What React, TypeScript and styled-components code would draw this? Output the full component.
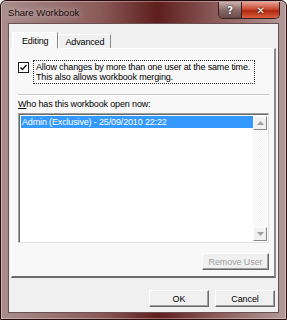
import React, { useState } from "react";
import styled, { createGlobalStyle } from "styled-components";

const GlobalStyle = createGlobalStyle`
  html, body { margin: 0; padding: 0; background: #ffffff; }
  body {
    font-family: "Liberation Sans", Arial, sans-serif;
    font-size: 9px;
    letter-spacing: -0.15px;
    color: #000;
  }
`;

const Window = styled.div`
  width: 287px;
  height: 320px;
  box-sizing: border-box;
  border: 1px solid #2a0a0a;
  border-radius: 6px 6px 0 0;
  background: linear-gradient(90deg, #a88e8c 0%, #8a5a58 35%, #5e1e1c 55%, #8a5a58 75%, #b29a98 100%);
  display: flex;
  flex-direction: column;
  padding: 0 7px 6px 7px;
  box-shadow: inset 0 0 0 1px rgba(255, 255, 255, 0.35);
`;

const TitleBar = styled.div`
  height: 22px;
  display: flex;
  align-items: flex-start;
  justify-content: space-between;
`;

const Title = styled.span`
  font-size: 9.6px;
  letter-spacing: 0;
  color: #1a0a0a;
  padding-top: 6px;
  text-shadow: 0 0 6px rgba(255, 255, 255, 0.8);
`;

const Caption = styled.div`
  display: flex;
  margin-top: 1px;
  margin-right: -1px;
  border: 1px solid #3a2020;
  border-top: none;
  border-radius: 0 0 5px 5px;
  overflow: hidden;
  height: 16px;
`;

const CapButton = styled.div<{ $close?: boolean }>`
  width: ${(p) => (p.$close ? "37px" : "22px")};
  display: flex;
  align-items: center;
  justify-content: center;
  color: #fff;
  font-family: "DejaVu Sans", sans-serif;
  font-weight: bold;
  font-size: 10px;
  text-shadow: 0 0 2px #000;
  background: ${(p) =>
    p.$close
      ? "linear-gradient(180deg, #e8a090 0%, #c84a30 45%, #b02810 55%, #d86040 100%)"
      : "linear-gradient(180deg, #c8b0ae 0%, #8a6a68 50%, #6a4a48 100%)"};
  border-left: ${(p) => (p.$close ? "1px solid #3a2020" : "none")};
`;

const Client = styled.div`
  flex: 1;
  background: #f0f0f0;
  border: 1px solid #6a5050;
  display: flex;
  flex-direction: column;
  padding: 7px 2px 0 2px;
`;

const TabStrip = styled.div`
  display: flex;
  align-items: flex-end;
  height: 17px;
  padding-left: 1px;
  position: relative;
  z-index: 1;
`;

const Tab = styled.div<{ $active?: boolean }>`
  height: ${(p) => (p.$active ? "17px" : "14px")};
  box-sizing: border-box;
  padding: 0 ${(p) => (p.$active ? "9px" : "6px")};
  display: flex;
  align-items: center;
  background: ${(p) => (p.$active ? "#f8f8f8" : "#f0f0f0")};
  border: 1px solid #ffffff;
  border-right: 1px solid #888;
  border-bottom: ${(p) => (p.$active ? "1px solid #f8f8f8" : "none")};
  ${(p) => (p.$active ? "margin-bottom: -1px;" : "")}
`;

const Panel = styled.div`
  height: 230px;
  box-sizing: border-box;
  background: #f8f8f8;
  border-top: 1px solid #ffffff;
  border-left: 1px solid #ffffff;
  border-right: 2px solid #8a8a8a;
  border-bottom: 2px solid #6a6a6a;
  padding: 11px 5px 0 6px;
  display: flex;
  flex-direction: column;
`;

const CheckRow = styled.div`
  display: flex;
  align-items: flex-start;
  gap: 4px;
`;

const CheckBox = styled.div`
  width: 9px;
  height: 9px;
  margin-top: 2px;
  border: 1px solid #1c1c1c;
  background: #fff;
  display: flex;
  align-items: center;
  justify-content: center;
`;

const CheckLabel = styled.div`
  border: 1px dotted #333;
  padding: 1px 2px;
  width: 216px;
  line-height: 10px;
  white-space: nowrap;
`;

const Separator = styled.div`
  height: 0;
  border-top: 1px solid #c8c8c8;
  border-bottom: 1px solid #ffffff;
  margin: 10px 0 2px 0;
`;

const FieldLabel = styled.div`
  margin-bottom: 2px;
  line-height: 13px;
`;

const ListBox = styled.div`
  height: 130px;
  box-sizing: border-box;
  background: #fff;
  border-top: 1px solid #a0a0a0;
  border-left: 1px solid #a0a0a0;
  border-right: 1px solid #e0e0e0;
  border-bottom: 1px solid #e0e0e0;
  box-shadow: inset 1px 1px 0 #696969;
  display: flex;
  padding: 2px 1px 1px 2px;
`;

const ListItems = styled.div`
  flex: 1;
`;

const ListItem = styled.div<{ $selected?: boolean }>`
  height: 12px;
  line-height: 12px;
  padding-left: 1px;
  white-space: nowrap;
  background: ${(p) => (p.$selected ? "#3399ff" : "transparent")};
  color: ${(p) => (p.$selected ? "#fff" : "#000")};
`;

const ScrollBar = styled.div`
  width: 14px;
  display: flex;
  flex-direction: column;
  justify-content: space-between;
  background: repeating-conic-gradient(#f4f4f4 0 25%, #fcfcfc 0 50%) 0 0 / 2px 2px;
`;

const ScrollButton = styled.div`
  height: 14px;
  box-sizing: border-box;
  background: #f0f0f0;
  border-top: 1px solid #fff;
  border-left: 1px solid #fff;
  border-right: 1px solid #888;
  border-bottom: 1px solid #888;
  display: flex;
  align-items: center;
  justify-content: center;
`;

const PanelActions = styled.div`
  display: flex;
  justify-content: flex-end;
  margin-top: 10px;
`;

const Button = styled.button<{ $w: number }>`
  width: ${(p) => p.$w}px;
  height: 17px;
  box-sizing: border-box;
  padding: 0;
  white-space: nowrap;
  font-family: "Liberation Sans", Arial, sans-serif;
  font-size: 9px;
  letter-spacing: -0.1px;
  color: #000;
  background: #f0f0f0;
  border-top: 1px solid #ffffff;
  border-left: 1px solid #ffffff;
  border-right: 1px solid #696969;
  border-bottom: 1px solid #696969;
  box-shadow: inset -1px -1px 0 #a0a0a0;
  &:disabled {
    color: #a0a0a0;
  }
`;

const Footer = styled.div`
  display: flex;
  justify-content: flex-end;
  gap: 6px;
  padding: 12px 1px 0 0;
`;

const Arrow = ({ up }: { up?: boolean }) => (
  <svg width="7" height="4" viewBox="0 0 7 4">
    <path d={up ? "M0 4 L3.5 0 L7 4 Z" : "M0 0 L3.5 4 L7 0 Z"} fill="#a0a0a0" />
  </svg>
);

export default function App() {
  const [allowChanges, setAllowChanges] = useState(true);
  return (
    <>
      <GlobalStyle />
      <Window>
        <TitleBar>
          <Title>Share Workbook</Title>
          <Caption>
            <CapButton>?</CapButton>
            <CapButton $close>✕</CapButton>
          </Caption>
        </TitleBar>
        <Client>
          <TabStrip>
            <Tab $active>Editing</Tab>
            <Tab>Advanced</Tab>
          </TabStrip>
          <Panel>
            <CheckRow onClick={() => setAllowChanges((v) => !v)}>
              <CheckBox>
                {allowChanges && (
                  <svg width="7" height="7" viewBox="0 0 7 7">
                    <path d="M0.5 3.5 L2.5 5.5 L6.5 1" stroke="#111" strokeWidth="1.4" fill="none" />
                  </svg>
                )}
              </CheckBox>
              <CheckLabel>
                Allow changes by more than one user at the same time.
                <br />
                This also allows workbook merging.
              </CheckLabel>
            </CheckRow>
            <Separator />
            <FieldLabel>
              <u>W</u>ho has this workbook open now:
            </FieldLabel>
            <ListBox>
              <ListItems>
                <ListItem $selected>Admin (Exclusive) - 25/09/2010 22:22</ListItem>
              </ListItems>
              <ScrollBar>
                <ScrollButton>
                  <Arrow up />
                </ScrollButton>
                <ScrollButton>
                  <Arrow />
                </ScrollButton>
              </ScrollBar>
            </ListBox>
            <PanelActions>
              <Button $w={67} disabled>
                Remove User
              </Button>
            </PanelActions>
          </Panel>
          <Footer>
            <Button $w={60}>OK</Button>
            <Button $w={60}>Cancel</Button>
          </Footer>
        </Client>
      </Window>
    </>
  );
}
